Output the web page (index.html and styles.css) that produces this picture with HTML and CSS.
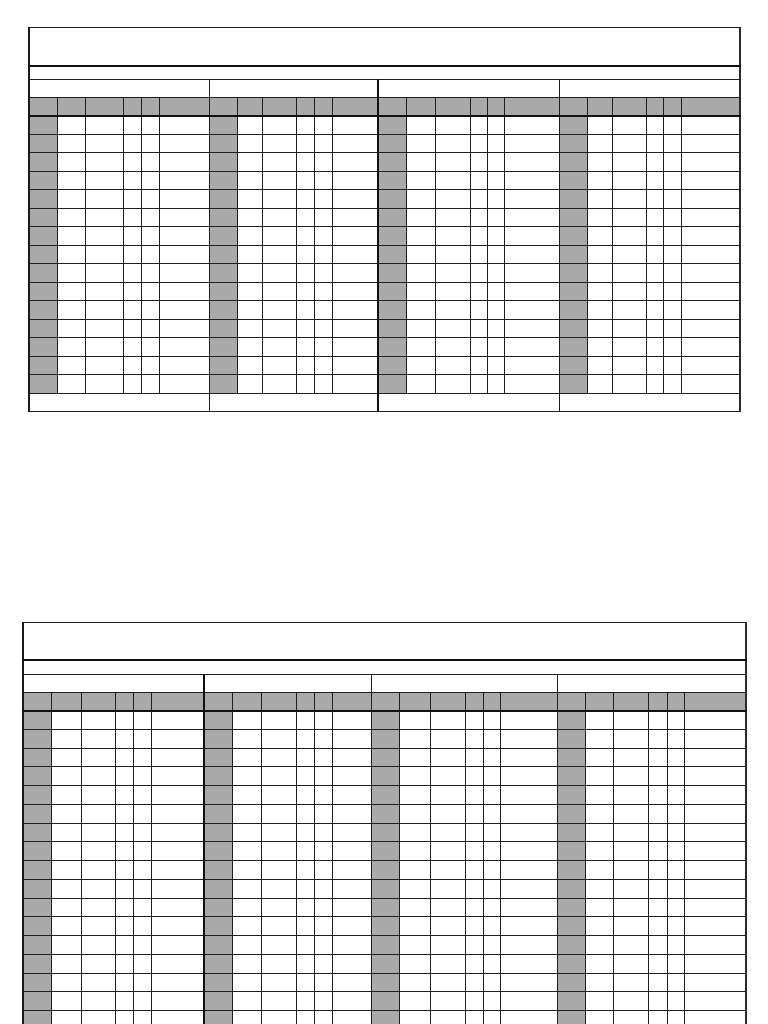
FILE: index.html
```html
<!DOCTYPE html>
<html lang="en">
<head>
<meta charset="utf-8">
<title>Form grid</title>
<link rel="stylesheet" href="styles.css">
</head>
<body>
<div class="page">
<table class="form t1">
<colgroup>
<col style="width:28px"><col style="width:28px"><col style="width:38px"><col style="width:18px"><col style="width:18px"><col style="width:50px">
<col style="width:28px"><col style="width:25px"><col style="width:34px"><col style="width:18px"><col style="width:18px"><col style="width:46px">
<col style="width:28px"><col style="width:29px"><col style="width:35px"><col style="width:17px"><col style="width:17px"><col style="width:55px">
<col style="width:28px"><col style="width:25px"><col style="width:34px"><col style="width:17px"><col style="width:18px"><col style="width:59px">
</colgroup>
<tr class="title"><td colspan="24"></td></tr>
<tr class="sub"><td colspan="24"></td></tr>
<tr class="sec"><td colspan="6"></td><td colspan="6"></td><td colspan="6" class="sep"></td><td colspan="6"></td></tr>
<tr class="head"><td></td><td></td><td></td><td></td><td></td><td></td><td></td><td></td><td></td><td></td><td></td><td></td><td class="sep"></td><td></td><td></td><td></td><td></td><td></td><td></td><td></td><td></td><td></td><td></td><td></td></tr>
<tr class="row"><td class="g"></td><td></td><td></td><td></td><td></td><td></td><td class="g"></td><td></td><td></td><td></td><td></td><td></td><td class="g sep"></td><td></td><td></td><td></td><td></td><td></td><td class="g"></td><td></td><td></td><td></td><td></td><td></td></tr>
<tr class="row"><td class="g"></td><td></td><td></td><td></td><td></td><td></td><td class="g"></td><td></td><td></td><td></td><td></td><td></td><td class="g sep"></td><td></td><td></td><td></td><td></td><td></td><td class="g"></td><td></td><td></td><td></td><td></td><td></td></tr>
<tr class="row"><td class="g"></td><td></td><td></td><td></td><td></td><td></td><td class="g"></td><td></td><td></td><td></td><td></td><td></td><td class="g sep"></td><td></td><td></td><td></td><td></td><td></td><td class="g"></td><td></td><td></td><td></td><td></td><td></td></tr>
<tr class="row"><td class="g"></td><td></td><td></td><td></td><td></td><td></td><td class="g"></td><td></td><td></td><td></td><td></td><td></td><td class="g sep"></td><td></td><td></td><td></td><td></td><td></td><td class="g"></td><td></td><td></td><td></td><td></td><td></td></tr>
<tr class="row"><td class="g"></td><td></td><td></td><td></td><td></td><td></td><td class="g"></td><td></td><td></td><td></td><td></td><td></td><td class="g sep"></td><td></td><td></td><td></td><td></td><td></td><td class="g"></td><td></td><td></td><td></td><td></td><td></td></tr>
<tr class="row"><td class="g"></td><td></td><td></td><td></td><td></td><td></td><td class="g"></td><td></td><td></td><td></td><td></td><td></td><td class="g sep"></td><td></td><td></td><td></td><td></td><td></td><td class="g"></td><td></td><td></td><td></td><td></td><td></td></tr>
<tr class="row"><td class="g"></td><td></td><td></td><td></td><td></td><td></td><td class="g"></td><td></td><td></td><td></td><td></td><td></td><td class="g sep"></td><td></td><td></td><td></td><td></td><td></td><td class="g"></td><td></td><td></td><td></td><td></td><td></td></tr>
<tr class="row"><td class="g"></td><td></td><td></td><td></td><td></td><td></td><td class="g"></td><td></td><td></td><td></td><td></td><td></td><td class="g sep"></td><td></td><td></td><td></td><td></td><td></td><td class="g"></td><td></td><td></td><td></td><td></td><td></td></tr>
<tr class="row"><td class="g"></td><td></td><td></td><td></td><td></td><td></td><td class="g"></td><td></td><td></td><td></td><td></td><td></td><td class="g sep"></td><td></td><td></td><td></td><td></td><td></td><td class="g"></td><td></td><td></td><td></td><td></td><td></td></tr>
<tr class="row"><td class="g"></td><td></td><td></td><td></td><td></td><td></td><td class="g"></td><td></td><td></td><td></td><td></td><td></td><td class="g sep"></td><td></td><td></td><td></td><td></td><td></td><td class="g"></td><td></td><td></td><td></td><td></td><td></td></tr>
<tr class="row"><td class="g"></td><td></td><td></td><td></td><td></td><td></td><td class="g"></td><td></td><td></td><td></td><td></td><td></td><td class="g sep"></td><td></td><td></td><td></td><td></td><td></td><td class="g"></td><td></td><td></td><td></td><td></td><td></td></tr>
<tr class="row"><td class="g"></td><td></td><td></td><td></td><td></td><td></td><td class="g"></td><td></td><td></td><td></td><td></td><td></td><td class="g sep"></td><td></td><td></td><td></td><td></td><td></td><td class="g"></td><td></td><td></td><td></td><td></td><td></td></tr>
<tr class="row"><td class="g"></td><td></td><td></td><td></td><td></td><td></td><td class="g"></td><td></td><td></td><td></td><td></td><td></td><td class="g sep"></td><td></td><td></td><td></td><td></td><td></td><td class="g"></td><td></td><td></td><td></td><td></td><td></td></tr>
<tr class="row"><td class="g"></td><td></td><td></td><td></td><td></td><td></td><td class="g"></td><td></td><td></td><td></td><td></td><td></td><td class="g sep"></td><td></td><td></td><td></td><td></td><td></td><td class="g"></td><td></td><td></td><td></td><td></td><td></td></tr>
<tr class="row"><td class="g"></td><td></td><td></td><td></td><td></td><td></td><td class="g"></td><td></td><td></td><td></td><td></td><td></td><td class="g sep"></td><td></td><td></td><td></td><td></td><td></td><td class="g"></td><td></td><td></td><td></td><td></td><td></td></tr>
<tr class="foot"><td colspan="6"></td><td colspan="6"></td><td colspan="6" class="sep"></td><td colspan="6"></td></tr>
</table>

<table class="form t2">
<colgroup>
<col style="width:28px"><col style="width:30px"><col style="width:34px"><col style="width:18px"><col style="width:18px"><col style="width:53px">
<col style="width:28px"><col style="width:29px"><col style="width:35px"><col style="width:18px"><col style="width:18px"><col style="width:39px">
<col style="width:28px"><col style="width:31px"><col style="width:35px"><col style="width:18px"><col style="width:17px"><col style="width:57px">
<col style="width:28px"><col style="width:28px"><col style="width:35px"><col style="width:19px"><col style="width:17px"><col style="width:62px">
</colgroup>
<tr class="title"><td colspan="24"></td></tr>
<tr class="sub"><td colspan="24"></td></tr>
<tr class="sec"><td colspan="6"></td><td colspan="6" class="sep"></td><td colspan="6"></td><td colspan="6"></td></tr>
<tr class="head"><td></td><td></td><td></td><td></td><td></td><td></td><td class="sep"></td><td></td><td></td><td></td><td></td><td></td><td></td><td></td><td></td><td></td><td></td><td></td><td></td><td></td><td></td><td></td><td></td><td></td></tr>
<tr class="row"><td class="g"></td><td></td><td></td><td></td><td></td><td></td><td class="g sep"></td><td></td><td></td><td></td><td></td><td></td><td class="g"></td><td></td><td></td><td></td><td></td><td></td><td class="g"></td><td></td><td></td><td></td><td></td><td></td></tr>
<tr class="row"><td class="g"></td><td></td><td></td><td></td><td></td><td></td><td class="g sep"></td><td></td><td></td><td></td><td></td><td></td><td class="g"></td><td></td><td></td><td></td><td></td><td></td><td class="g"></td><td></td><td></td><td></td><td></td><td></td></tr>
<tr class="row"><td class="g"></td><td></td><td></td><td></td><td></td><td></td><td class="g sep"></td><td></td><td></td><td></td><td></td><td></td><td class="g"></td><td></td><td></td><td></td><td></td><td></td><td class="g"></td><td></td><td></td><td></td><td></td><td></td></tr>
<tr class="row"><td class="g"></td><td></td><td></td><td></td><td></td><td></td><td class="g sep"></td><td></td><td></td><td></td><td></td><td></td><td class="g"></td><td></td><td></td><td></td><td></td><td></td><td class="g"></td><td></td><td></td><td></td><td></td><td></td></tr>
<tr class="row"><td class="g"></td><td></td><td></td><td></td><td></td><td></td><td class="g sep"></td><td></td><td></td><td></td><td></td><td></td><td class="g"></td><td></td><td></td><td></td><td></td><td></td><td class="g"></td><td></td><td></td><td></td><td></td><td></td></tr>
<tr class="row"><td class="g"></td><td></td><td></td><td></td><td></td><td></td><td class="g sep"></td><td></td><td></td><td></td><td></td><td></td><td class="g"></td><td></td><td></td><td></td><td></td><td></td><td class="g"></td><td></td><td></td><td></td><td></td><td></td></tr>
<tr class="row"><td class="g"></td><td></td><td></td><td></td><td></td><td></td><td class="g sep"></td><td></td><td></td><td></td><td></td><td></td><td class="g"></td><td></td><td></td><td></td><td></td><td></td><td class="g"></td><td></td><td></td><td></td><td></td><td></td></tr>
<tr class="row"><td class="g"></td><td></td><td></td><td></td><td></td><td></td><td class="g sep"></td><td></td><td></td><td></td><td></td><td></td><td class="g"></td><td></td><td></td><td></td><td></td><td></td><td class="g"></td><td></td><td></td><td></td><td></td><td></td></tr>
<tr class="row"><td class="g"></td><td></td><td></td><td></td><td></td><td></td><td class="g sep"></td><td></td><td></td><td></td><td></td><td></td><td class="g"></td><td></td><td></td><td></td><td></td><td></td><td class="g"></td><td></td><td></td><td></td><td></td><td></td></tr>
<tr class="row"><td class="g"></td><td></td><td></td><td></td><td></td><td></td><td class="g sep"></td><td></td><td></td><td></td><td></td><td></td><td class="g"></td><td></td><td></td><td></td><td></td><td></td><td class="g"></td><td></td><td></td><td></td><td></td><td></td></tr>
<tr class="row"><td class="g"></td><td></td><td></td><td></td><td></td><td></td><td class="g sep"></td><td></td><td></td><td></td><td></td><td></td><td class="g"></td><td></td><td></td><td></td><td></td><td></td><td class="g"></td><td></td><td></td><td></td><td></td><td></td></tr>
<tr class="row"><td class="g"></td><td></td><td></td><td></td><td></td><td></td><td class="g sep"></td><td></td><td></td><td></td><td></td><td></td><td class="g"></td><td></td><td></td><td></td><td></td><td></td><td class="g"></td><td></td><td></td><td></td><td></td><td></td></tr>
<tr class="row"><td class="g"></td><td></td><td></td><td></td><td></td><td></td><td class="g sep"></td><td></td><td></td><td></td><td></td><td></td><td class="g"></td><td></td><td></td><td></td><td></td><td></td><td class="g"></td><td></td><td></td><td></td><td></td><td></td></tr>
<tr class="row"><td class="g"></td><td></td><td></td><td></td><td></td><td></td><td class="g sep"></td><td></td><td></td><td></td><td></td><td></td><td class="g"></td><td></td><td></td><td></td><td></td><td></td><td class="g"></td><td></td><td></td><td></td><td></td><td></td></tr>
<tr class="row"><td class="g"></td><td></td><td></td><td></td><td></td><td></td><td class="g sep"></td><td></td><td></td><td></td><td></td><td></td><td class="g"></td><td></td><td></td><td></td><td></td><td></td><td class="g"></td><td></td><td></td><td></td><td></td><td></td></tr>
<tr class="row"><td class="g"></td><td></td><td></td><td></td><td></td><td></td><td class="g sep"></td><td></td><td></td><td></td><td></td><td></td><td class="g"></td><td></td><td></td><td></td><td></td><td></td><td class="g"></td><td></td><td></td><td></td><td></td><td></td></tr>
<tr class="row"><td class="g"></td><td></td><td></td><td></td><td></td><td></td><td class="g sep"></td><td></td><td></td><td></td><td></td><td></td><td class="g"></td><td></td><td></td><td></td><td></td><td></td><td class="g"></td><td></td><td></td><td></td><td></td><td></td></tr>
</table>
</div>
</body>
</html>
```

FILE: styles.css
```css
html {
  overflow: hidden;
  background: #ffffff;
}

body {
  margin: 0;
  font-family: "Liberation Sans", Arial, sans-serif;
  font-size: 0;
  line-height: 0;
}

.page {
  padding-top: 27px;
}

.form {
  border-collapse: collapse;
  border-left: 2px solid #1a1a1a;
  border-right: 2px solid #2a2a2a;
  border-top: 1px solid #2a2a2a;
}

.form td {
  padding: 0;
  border: 1px solid #1e1e1e;
  background: #ffffff;
}

.form td.g,
.form .head td {
  background: #a9a9a9;
}

.form .title td {
  border-bottom: 2px solid #111111;
}

.form .head td {
  border-bottom: 2px solid #111111;
}

.form td.sep {
  border-left: 2px solid #111111;
}

.t1 {
  margin-left: 28px;
}

.t1 .title { height: 38px; }
.t1 .sub { height: 14px; }
.t1 .sec { height: 18px; }
.t1 .head { height: 18px; }
.t1 .row { height: 18.53px; }
.t1 .foot { height: 18px; }

.t2 {
  margin-left: 22px;
  margin-top: 210px;
}

.t2 .title { height: 37.5px; }
.t2 .sub { height: 15px; }
.t2 .sec { height: 17.5px; }
.t2 .head { height: 18.5px; }
.t2 .row { height: 18.75px; }
```
